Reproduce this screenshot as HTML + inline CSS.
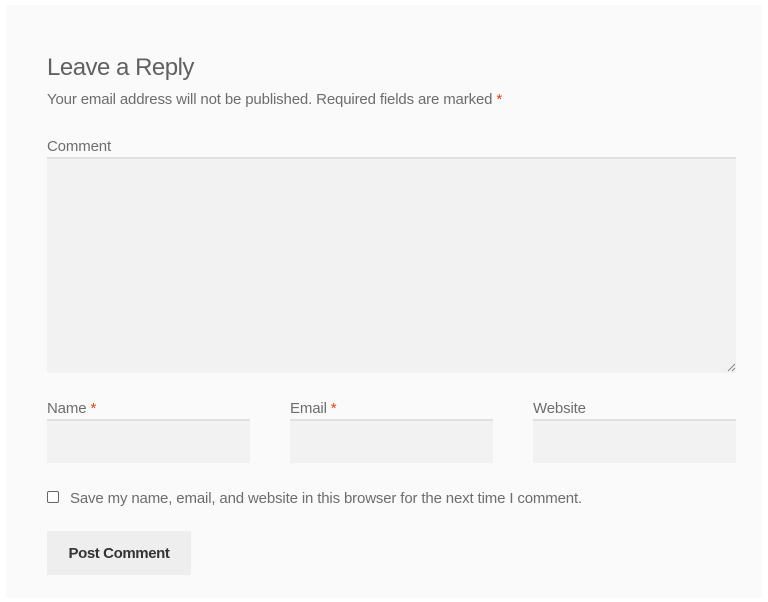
<!DOCTYPE html>
<html><head><meta charset="utf-8"><style>
body{margin:0;background:#fff;width:768px;height:602px;position:relative;overflow:hidden;font-family:"Liberation Sans",sans-serif;color:#6d6d6d}
.panel{position:absolute;left:6px;top:5px;width:756px;height:593px;background:#fafafa}
.a{position:absolute;white-space:nowrap}
.t{font-size:15px;letter-spacing:-0.15px}
.req{color:#e2401c}
.f{position:absolute;background:#f2f2f2;border-top:2px solid #e0e0e0;box-sizing:border-box}
</style></head><body>
<div class="panel"></div>
<div class="a" style="left:47px;top:54px;font-size:24px;color:#616161;letter-spacing:-0.5px">Leave a Reply</div>
<div class="a t" style="left:47px;top:91px">Your email address will not be published. Required fields are marked <span class="req">*</span></div>
<div class="a t" style="left:47px;top:138px">Comment</div>
<div class="f" style="left:47px;top:157px;width:689px;height:216px"></div>
<svg class="a" style="left:726px;top:362px" width="10" height="10"><path d="M9 2L2 9M9 6L6 9" stroke="#888" stroke-width="1"/></svg>
<div class="a t" style="left:47px;top:400px">Name <span class="req">*</span></div>
<div class="a t" style="left:290px;top:400px">Email <span class="req">*</span></div>
<div class="a t" style="left:533px;top:400px">Website</div>
<div class="f" style="left:47px;top:419px;width:203px;height:44px"></div>
<div class="f" style="left:290px;top:419px;width:203px;height:44px"></div>
<div class="f" style="left:533px;top:419px;width:203px;height:44px"></div>
<div class="a" style="left:47px;top:491px;width:10px;height:10px;border:1px solid #666;border-radius:2px;background:#fff"></div>
<div class="a t" style="left:70px;top:490px">Save my name, email, and website in this browser for the next time I comment.</div>
<div class="a" style="left:47px;top:531px;width:144px;height:44px;background:#eee"></div>
<div class="a" style="left:47px;top:545px;width:144px;text-align:center;font-size:15px;font-weight:bold;color:#333;letter-spacing:-0.4px">Post Comment</div>
</body></html>
